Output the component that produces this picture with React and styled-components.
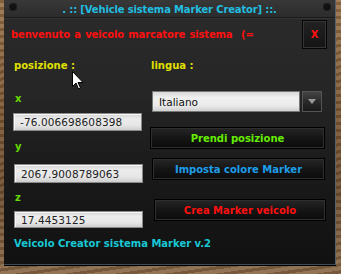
import React from 'react';
import styled, { createGlobalStyle } from 'styled-components';

const GlobalStyle = createGlobalStyle`
    html, body {
        margin: 0;
        padding: 0;
        width: 341px;
        height: 274px;
        overflow: hidden;
    }
    body {
        background:
            repeating-linear-gradient(172deg, rgba(60,35,15,.25) 0 3px, rgba(255,230,190,.08) 3px 7px),
            linear-gradient(180deg, #9a7650 0%, #7d5a38 40%, #6e5034 70%, #8a6c4c 100%);
        font-family: "DejaVu Sans", Tahoma, sans-serif;
    }
`;

const Window = styled.div`
    position: relative;
    margin-left: 4px;
    width: 331px;
    height: 264px;
    display: flex;
    flex-direction: column;
    background: linear-gradient(180deg, #2b2b2b 0%, #262626 35%, #1a1a1a 65%, #111 100%);
    border-right: 1px solid #55606a;
    border-bottom: 1px solid #3e4a55;
    box-shadow: 0 1px 0 #000;
`;

const TitleBar = styled.div`
    position: relative;
    height: 17px;
    display: flex;
    align-items: center;
    justify-content: center;
    background: linear-gradient(180deg, #383838 0%, #2c2c2c 100%);
    border-bottom: 1px solid #1a1a1a;
    box-shadow: 0 1px 0 #333;
`;

const Rivet = styled.span`
    position: absolute;
    top: 3px;
    ${p => (p.$right ? 'right: 4px;' : 'left: 5px;')}
    width: 8px;
    height: 8px;
    border-radius: 50%;
    background: radial-gradient(circle at 50% 40%, #151515 0%, #0c0c0c 60%, #3a3a3a 100%);
    box-shadow: inset 0 0 0 1px #202020;
`;

const Title = styled.span`
    color: #22bee0;
    font-size: 10px;
    font-weight: bold;
    letter-spacing: -0.15px;
    margin-top: 2px;
`;

const Content = styled.div`
    padding: 0 9px 0 9px;
    display: flex;
    flex-direction: column;
`;

const TopRow = styled.div`
    display: flex;
    align-items: center;
    justify-content: space-between;
    margin-top: 2px;
    margin-right: -1px;
`;

const Welcome = styled.span`
    color: #ff1010;
    font-size: 10px;
    font-weight: bold;
    margin-left: -2px;
    letter-spacing: -0.15px;
    word-spacing: 1px;
`;

const CloseButton = styled.button`
    width: 25px;
    height: 29px;
    padding: 0;
    background: linear-gradient(180deg, #222 0%, #141414 100%);
    border: 1px solid #050505;
    box-shadow: inset 0 0 0 1px #353535;
    color: #ff1010;
    font-family: "DejaVu Sans", sans-serif;
    font-size: 10px;
    font-weight: bold;
`;

const Columns = styled.div`
    display: grid;
    grid-template-columns: 139px 1fr;
`;

const Column = styled.div`
    display: flex;
    flex-direction: column;
    align-items: flex-start;
`;

const Label = styled.span`
    display: block;
    height: 12px;
    line-height: 12px;
    font-size: 10px;
    font-weight: bold;
    color: ${p => p.$color};
    margin-top: ${p => p.$mt}px;
    margin-left: ${p => p.$ml || 0}px;
`;

const Field = styled.div`
    box-sizing: border-box;
    width: 129px;
    height: ${p => p.$h}px;
    margin-top: ${p => p.$mt}px;
    margin-left: ${p => p.$ml || 0}px;
    padding-left: 6px;
    display: flex;
    align-items: center;
    background: linear-gradient(180deg, #d4d4d4 0%, #ececec 30%, #e6e6e6 70%, #cfcfcf 100%);
    border: 1px solid #8a8a8a;
    box-shadow: inset 1px 1px 0 #f8f8f8;
    color: #222;
    font-size: 10.5px;
    letter-spacing: 0.1px;
`;

const Select = styled.div`
    display: flex;
    gap: 2px;
    margin-top: 19px;
    margin-left: 0;
    height: 21px;
`;

const SelectBox = styled.div`
    box-sizing: border-box;
    width: 148px;
    height: 21px;
    padding-left: 6px;
    display: flex;
    align-items: center;
    background: linear-gradient(180deg, #d8d8d8 0%, #f0f0f0 30%, #ebebeb 70%, #d0d0d0 100%);
    border: 1px solid #777;
    color: #111;
    font-size: 10.5px;
`;

const SelectArrow = styled.div`
    width: 20px;
    height: 21px;
    box-sizing: border-box;
    display: flex;
    align-items: center;
    justify-content: center;
    background: linear-gradient(180deg, #444 0%, #2a2a2a 50%, #1a1a1a 100%);
    border: 1px solid #555;
`;

const ActionButton = styled.button`
    box-sizing: border-box;
    width: ${p => p.$w}px;
    height: 22px;
    margin-top: ${p => p.$mt}px;
    margin-left: ${p => p.$ml}px;
    padding: 0;
    background: linear-gradient(180deg, #262626 0%, #151515 50%, #0b0b0b 100%);
    border: 1px solid #000;
    box-shadow: inset 0 0 0 1px #2e2e2e;
    color: ${p => p.$color};
    font-family: "DejaVu Sans", sans-serif;
    font-size: 10px;
    font-weight: bold;
`;

const Footer = styled.span`
    display: block;
    margin-top: 10px;
    margin-left: 1px;
    height: 12px;
    line-height: 12px;
    color: #18c8d4;
    font-size: 10px;
    font-weight: bold;
`;

const Pointer = styled.svg`
    position: absolute;
    left: 68px;
    top: 71px;
`;

const App = () => {
    return (
        <>
            <GlobalStyle />
            <Window>
                <TitleBar>
                    <Rivet />
                    <Title>. :: [Vehicle sistema Marker Creator] ::.</Title>
                    <Rivet $right />
                </TitleBar>
                <Content>
                    <TopRow>
                        <Welcome>benvenuto a veicolo marcatore sistema&nbsp; (=</Welcome>
                        <CloseButton>X</CloseButton>
                    </TopRow>
                    <Columns>
                        <Column>
                            <Label $color="#e0e000" $mt={11} $ml={1}>posizione :</Label>
                            <Label $color="#66dd00" $mt={21} $ml={2}>x</Label>
                            <Field $h={18} $mt={8}>-76.006698608398</Field>
                            <Label $color="#66dd00" $mt={10} $ml={2}>y</Label>
                            <Field $h={19} $mt={11} $ml={1}>2067.9008789063</Field>
                            <Label $color="#66dd00" $mt={9} $ml={2}>z</Label>
                            <Field $h={17} $mt={7} $ml={1}>17.4453125</Field>
                        </Column>
                        <Column>
                            <Label $color="#e0e000" $mt={11} $ml={-1}>lingua :</Label>
                            <Select>
                                <SelectBox>Italiano</SelectBox>
                                <SelectArrow>
                                    <svg width="8" height="5" viewBox="0 0 8 5">
                                        <path d="M0 0h8L4 5z" fill="#9a9a9a" />
                                    </svg>
                                </SelectArrow>
                            </Select>
                            <ActionButton $w={175} $mt={15} $ml={-2} $color="#66ee00">Prendi posizione</ActionButton>
                            <ActionButton $w={173} $mt={9} $ml={0} $color="#1e9ee8">Imposta colore Marker</ActionButton>
                            <ActionButton $w={172} $mt={19} $ml={2} $color="#ff1010">Crea Marker veicolo</ActionButton>
                        </Column>
                    </Columns>
                    <Footer>Veicolo Creator sistema Marker v.2</Footer>
                </Content>
                <Pointer width="12" height="19" viewBox="0 0 12 19">
                    <path d="M0.5 0.5v15l3.5-3.5 2.5 6 2-1-2.5-5.5h5z" fill="#fff" stroke="#000" strokeWidth="1" />
                </Pointer>
            </Window>
        </>
    );
};

export default App;
